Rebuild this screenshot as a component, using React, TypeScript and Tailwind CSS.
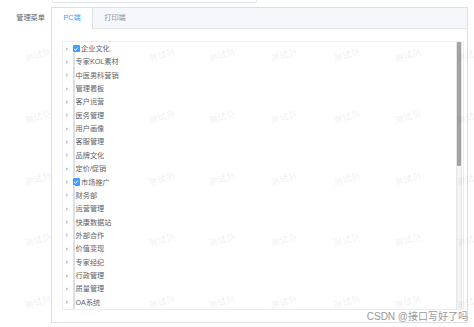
import React from 'react';

const menus = [
  { name: '企业文化', checked: true },
  { name: '专家KOL素材' },
  { name: '中医男科营销' },
  { name: '管理看板' },
  { name: '客户运营' },
  { name: '医务管理' },
  { name: '用户画像' },
  { name: '客服管理' },
  { name: '品牌文化' },
  { name: '定价/促销' },
  { name: '市场推广', checked: true },
  { name: '财务部' },
  { name: '运营管理' },
  { name: '快康数据站' },
  { name: '外部合作' },
  { name: '价值变现' },
  { name: '专家经纪' },
  { name: '行政管理' },
  { name: '质量管理' },
  { name: 'OA系统' },
];

// watermark grid (the column behind the tree labels doesn't show in the shot)
const wmCols = [38, 162, 222, 284, 347, 408, 470];
const wmRows = [56, 118, 180, 241, 303];

const Caret = () => (
  <svg width="6" height="6" viewBox="0 0 6 6" className="shrink-0">
    <path d="M2 1.2 L4.4 3 L2 4.8 Z" fill="#c0c4cc" />
  </svg>
);

const Checkbox = ({ checked }: { checked?: boolean }) =>
  checked ? (
    <span className="flex h-[7.5px] w-[7.5px] shrink-0 items-center justify-center rounded-[1px] bg-[#409eff]">
      <svg width="6" height="6" viewBox="0 0 6 6">
        <path d="M1.2 3.1 L2.5 4.3 L4.8 1.6" fill="none" stroke="#fff" strokeWidth="1" />
      </svg>
    </span>
  ) : (
    <span className="h-[7.5px] w-[7.5px] shrink-0 rounded-[1px] border border-[#dcdfe6] bg-white" />
  );

export default function App() {
  return (
    <div
      className="relative h-[327px] w-[474px] overflow-hidden bg-white text-[#606266]"
      style={{ fontFamily: '"Liberation Sans", "Noto Sans CJK SC", sans-serif' }}
    >
      {/* bottom edge of the previous form input */}
      <div className="ml-[52px] h-[3px] w-[205px] rounded-b-[2px] border-x border-b border-[#e4e7ed]" />

      <div className="mt-[4px] flex">
        <div className="flex h-[22px] w-[51px] items-center justify-end pr-[6px] text-[7.2px] text-[#606266]">
          管理菜单
        </div>

        <div className="w-[417px] border border-[#dcdfe6] bg-white">
          <div className="flex h-[21px] border-b border-[#e4e7ed] bg-[#f5f7fa] text-[7.2px]">
            <div className="-mb-px flex h-[21px] items-center border-r border-[#dcdfe6] bg-white px-[11.5px] text-[#409eff]">
              PC端
            </div>
            <div className="flex items-center px-[11px] text-[#909399]">打印端</div>
          </div>

          <div className="pb-[12px] pl-[10px] pr-[3px] pt-[12px]">
            <div className="flex h-[269px] border border-[#ebeef5]">
              <div className="flex-1 overflow-hidden">
                {menus.map((m, i) => (
                  <div key={i} className="flex h-[13.35px] items-center pl-[1px]">
                    <Caret />
                    <span className="ml-[2.5px]">
                      <Checkbox checked={m.checked} />
                    </span>
                    <span className="ml-[1px] whitespace-nowrap text-[7.2px] leading-none">{m.name}</span>
                  </div>
                ))}
              </div>
              <div className="mr-[1px] flex w-[6px] flex-col border-x border-[#e6e6e6] bg-[#f4f4f4]">
                <div className="h-[124px] rounded-[1px] bg-[#a3a3a3]" />
              </div>
            </div>
          </div>
        </div>
      </div>

      {/* watermark layer */}
      <div className="pointer-events-none absolute inset-0">
        {wmRows.map((y) =>
          wmCols.map((x) => (
            <span
              key={`${x}-${y}`}
              className="absolute -translate-x-1/2 -translate-y-1/2 -rotate-[15deg] whitespace-nowrap text-[9px] text-[#000]/10"
              style={{ left: x, top: y }}
            >
              测试员
            </span>
          ))
        )}
      </div>

      <div className="pointer-events-none absolute bottom-[5px] right-[6px] text-[10px] leading-none text-[#9a9a9a]">
        CSDN @接口写好了吗
      </div>
    </div>
  );
}
